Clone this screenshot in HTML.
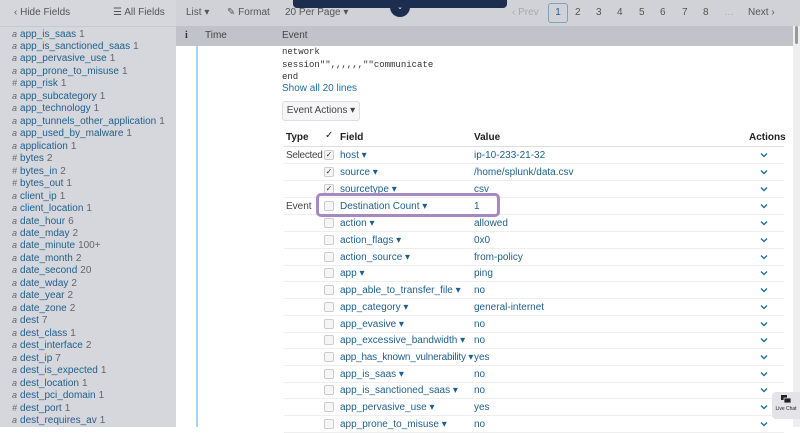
<!DOCTYPE html><html><head><style>
*{margin:0;padding:0;box-sizing:border-box}
body{width:800px;height:427px;overflow:hidden;font-family:"Liberation Sans",sans-serif;font-size:10px;color:#333;background:#fff;position:relative}
.a{position:absolute;white-space:nowrap}
#side{left:0;top:0;width:176px;height:427px;background:#d6d7dd}
#top{left:176px;top:0;width:624px;height:26px;background:#d1d2d8}
#hdr{left:176px;top:26px;width:617px;height:20px;background:#c2c2ca}
.sf{height:12.48px;line-height:12.5px;padding-left:12px;color:#1f5f8a;overflow:hidden}
.sf i{color:#666;font-size:9px;margin-right:3px}
.sf b{font-weight:normal;color:#666;margin-left:3px}
.tb{color:#555;font-size:10px;top:7px}
.pg{top:7px;color:#555;font-size:10px}
.r{left:284px;width:500px;height:17px;border-bottom:1px solid #eee}
.cb{position:absolute;left:40px;top:3px;width:10px;height:10px;border:1px solid #ccc;border-radius:2px;background:#f6f6f6;font-size:8px;line-height:8px;text-align:center;color:#333}
.fd{position:absolute;left:56px;top:3px;color:#1f5f8a}
.vl{position:absolute;left:190px;top:3px;color:#1f5f8a}
.ch{position:absolute;left:476px;top:5px;width:8px;height:6px}
</style></head><body>
<div class="a" id="side"></div>
<div class="a" id="top"></div>
<div class="a" id="hdr"></div>
<div class="a" style="left:0;top:26px;width:176px;height:1px;background:#c8c9cf"></div>
<div class="a tb" style="left:14px;color:#555">‹ Hide Fields</div>
<div class="a tb" style="left:113px">☰ All Fields</div>
<div class="a tb" style="left:186px">List ▾</div>
<div class="a tb" style="left:227px">✎ Format</div>
<div class="a tb" style="left:285px">20 Per Page ▾</div>
<div class="a" style="left:293px;top:0;width:214px;height:8px;background:#1d2d4f;border-radius:0 0 4px 4px"></div>
<div class="a" style="left:390px;top:0;width:20px;height:17px;background:#1d2d4f;border-radius:0 0 10px 10px;color:#fff;font-size:7px;text-align:center;line-height:16px">⌄</div>
<div class="a pg" style="left:512px;color:#aaa">‹ Prev</div>
<div class="a" style="left:548px;top:3px;width:20px;height:20px;border:1px solid #7aa3c0;border-radius:3px;color:#1f5f8a;text-align:center;line-height:18px">1</div>
<div class="a pg" style="left:575px">2</div><div class="a pg" style="left:596px">3</div><div class="a pg" style="left:617px">4</div><div class="a pg" style="left:639px">5</div><div class="a pg" style="left:660px">6</div><div class="a pg" style="left:682px">7</div><div class="a pg" style="left:703px">8</div>
<div class="a pg" style="left:724px;color:#aaa">…</div>
<div class="a pg" style="left:748px">Next ›</div>
<div class="a" style="left:185px;top:30px;font-weight:bold;font-family:'Liberation Serif',serif">i</div>
<div class="a" style="left:205px;top:30px;color:#444">Time</div>
<div class="a" style="left:282px;top:30px;color:#444">Event</div>
<div class="a" style="left:196px;top:46px;width:2px;height:381px;background:#a9d5ef"></div>
<div class="a" style="left:793px;top:26px;width:7px;height:401px;background:#eee"></div>
<div class="a" style="left:795px;top:26px;width:3px;height:18px;background:#999;border-radius:2px"></div>
<div class="a" style="left:282px;top:46px;font-family:'Liberation Mono',monospace;font-size:9px;line-height:12.5px;color:#333">network<br>session"",,,,,,""communicate<br>end</div>
<div class="a" style="left:282px;top:83px;color:#1f6fa0">Show all 20 lines</div>
<div class="a" style="left:282px;top:101px;width:78px;height:20px;border:1px solid #ddd;border-radius:3px;background:#f6f6f8;color:#444;text-align:center;line-height:18px">Event Actions ▾</div>
<div class="a" style="left:284px;top:130px;width:500px;height:17px;border-bottom:1px solid #ddd;font-weight:bold;color:#222">
<span class="a" style="left:2px;top:2px">Type</span><span class="a" style="left:41px;top:0;font-weight:normal">✓</span><span class="a" style="left:56px;top:2px">Field</span><span class="a" style="left:190px;top:2px">Value</span><span class="a" style="left:465px;top:2px">Actions</span></div>
<svg width="0" height="0" style="position:absolute"><defs><symbol id="v" viewBox="0 0 8 6"><path d="M1 1.5 L4 4.5 L7 1.5" fill="none" stroke="#1f6fa0" stroke-width="1.4"/></symbol></defs></svg>
<div class="a r" style="top:147px"><span class="a" style="left:2px;top:3px;color:#444;letter-spacing:-.3px">Selected</span><span class="cb">✓</span><span class="fd">host ▾</span><span class="vl">ip-10-233-21-32</span><svg class="ch"><use href="#v"/></svg></div>
<div class="a r" style="top:164px"><span class="cb">✓</span><span class="fd">source ▾</span><span class="vl">/home/splunk/data.csv</span><svg class="ch"><use href="#v"/></svg></div>
<div class="a r" style="top:181px"><span class="cb">✓</span><span class="fd">sourcetype ▾</span><span class="vl">csv</span><svg class="ch"><use href="#v"/></svg></div>
<div class="a r" style="top:198px"><span class="a" style="left:2px;top:3px;color:#444">Event</span><span class="cb"></span><span class="fd">Destination Count ▾</span><span class="vl">1</span><svg class="ch"><use href="#v"/></svg></div>
<div class="a r" style="top:215px"><span class="cb"></span><span class="fd">action ▾</span><span class="vl">allowed</span><svg class="ch"><use href="#v"/></svg></div>
<div class="a r" style="top:232px"><span class="cb"></span><span class="fd">action_flags ▾</span><span class="vl">0x0</span><svg class="ch"><use href="#v"/></svg></div>
<div class="a r" style="top:249px"><span class="cb"></span><span class="fd">action_source ▾</span><span class="vl">from-policy</span><svg class="ch"><use href="#v"/></svg></div>
<div class="a r" style="top:265px"><span class="cb"></span><span class="fd">app ▾</span><span class="vl">ping</span><svg class="ch"><use href="#v"/></svg></div>
<div class="a r" style="top:282px"><span class="cb"></span><span class="fd">app_able_to_transfer_file ▾</span><span class="vl">no</span><svg class="ch"><use href="#v"/></svg></div>
<div class="a r" style="top:299px"><span class="cb"></span><span class="fd">app_category ▾</span><span class="vl">general-internet</span><svg class="ch"><use href="#v"/></svg></div>
<div class="a r" style="top:316px"><span class="cb"></span><span class="fd">app_evasive ▾</span><span class="vl">no</span><svg class="ch"><use href="#v"/></svg></div>
<div class="a r" style="top:332px"><span class="cb"></span><span class="fd">app_excessive_bandwidth ▾</span><span class="vl">no</span><svg class="ch"><use href="#v"/></svg></div>
<div class="a r" style="top:349px"><span class="cb"></span><span class="fd" style="letter-spacing:-.2px">app_has_known_vulnerability ▾</span><span class="vl">yes</span><svg class="ch"><use href="#v"/></svg></div>
<div class="a r" style="top:366px"><span class="cb"></span><span class="fd">app_is_saas ▾</span><span class="vl">no</span><svg class="ch"><use href="#v"/></svg></div>
<div class="a r" style="top:382px"><span class="cb"></span><span class="fd">app_is_sanctioned_saas ▾</span><span class="vl">no</span><svg class="ch"><use href="#v"/></svg></div>
<div class="a r" style="top:399px"><span class="cb"></span><span class="fd">app_pervasive_use ▾</span><span class="vl">yes</span><svg class="ch"><use href="#v"/></svg></div>
<div class="a r" style="top:416px"><span class="cb"></span><span class="fd">app_prone_to_misuse ▾</span><span class="vl">no</span><svg class="ch"><use href="#v"/></svg></div>
<div class="a" style="left:316px;top:193px;width:184px;height:24px;border:3px solid #a589c0;border-radius:5px"></div>
<div class="a" style="left:772px;top:392px;width:28px;height:27px;background:#e4e4e8;border-radius:4px 0 0 4px;font-size:5px;text-align:center;color:#222;padding-top:3px"><svg width="10" height="9" viewBox="0 0 10 9"><rect x="0" y="0" width="6" height="5" fill="#222"/><rect x="3" y="3" width="7" height="5" fill="#222" stroke="#e4e4e8" stroke-width=".8"/></svg><br>Live Chat</div>
<div class="a" style="left:0;top:27.5px;width:176px;font-size:10px">
<div class="sf"><i>a</i>app_is_saas<b>1</b></div>
<div class="sf"><i>a</i>app_is_sanctioned_saas<b>1</b></div>
<div class="sf"><i>a</i>app_pervasive_use<b>1</b></div>
<div class="sf"><i>a</i>app_prone_to_misuse<b>1</b></div>
<div class="sf"><i>#</i>app_risk<b>1</b></div>
<div class="sf"><i>a</i>app_subcategory<b>1</b></div>
<div class="sf"><i>a</i>app_technology<b>1</b></div>
<div class="sf"><i>a</i>app_tunnels_other_application<b>1</b></div>
<div class="sf"><i>a</i>app_used_by_malware<b>1</b></div>
<div class="sf"><i>a</i>application<b>1</b></div>
<div class="sf"><i>#</i>bytes<b>2</b></div>
<div class="sf"><i>#</i>bytes_in<b>2</b></div>
<div class="sf"><i>#</i>bytes_out<b>1</b></div>
<div class="sf"><i>a</i>client_ip<b>1</b></div>
<div class="sf"><i>a</i>client_location<b>1</b></div>
<div class="sf"><i>a</i>date_hour<b>6</b></div>
<div class="sf"><i>a</i>date_mday<b>2</b></div>
<div class="sf"><i>a</i>date_minute<b>100+</b></div>
<div class="sf"><i>a</i>date_month<b>2</b></div>
<div class="sf"><i>a</i>date_second<b>20</b></div>
<div class="sf"><i>a</i>date_wday<b>2</b></div>
<div class="sf"><i>a</i>date_year<b>2</b></div>
<div class="sf"><i>a</i>date_zone<b>2</b></div>
<div class="sf"><i>a</i>dest<b>7</b></div>
<div class="sf"><i>a</i>dest_class<b>1</b></div>
<div class="sf"><i>a</i>dest_interface<b>2</b></div>
<div class="sf"><i>a</i>dest_ip<b>7</b></div>
<div class="sf"><i>a</i>dest_is_expected<b>1</b></div>
<div class="sf"><i>a</i>dest_location<b>1</b></div>
<div class="sf"><i>a</i>dest_pci_domain<b>1</b></div>
<div class="sf"><i>#</i>dest_port<b>1</b></div>
<div class="sf"><i>a</i>dest_requires_av<b>1</b></div>
</div>
</body></html>
